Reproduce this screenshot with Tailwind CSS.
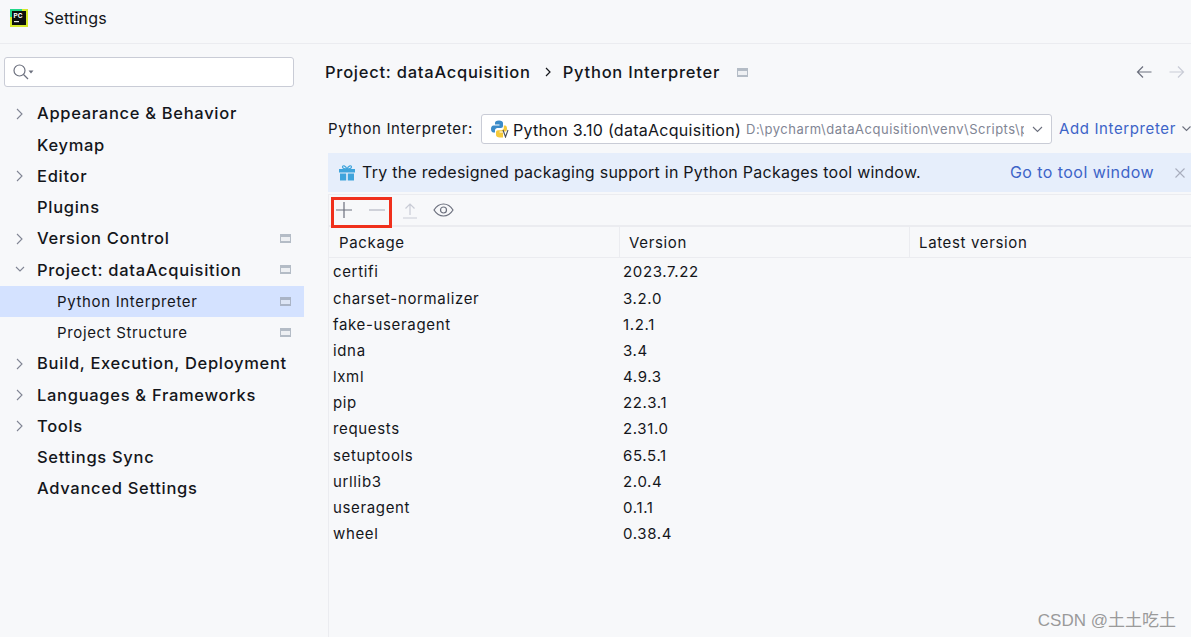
<!DOCTYPE html>
<html lang="en">
<head>
    <meta charset="UTF-8">
    <title>Settings</title>
    <script src="https://cdn.jsdelivr.net/npm/@tailwindcss/browser@4"></script>
</head>
<body class="bg-[#f7f8fa] font-['Inter',sans-serif] text-[#14161b] w-[1191px] h-[637px] overflow-hidden relative">
    <!-- title bar -->
    <div class="h-[44px] border-b border-[#ebecf0] flex items-center pl-[10px] pb-[8px]">
        <svg width="18" height="18" viewBox="0 0 18 18">
            <rect width="18" height="18" fill="#d6e82a"/>
            <rect x="0" y="0" width="12" height="8" fill="#21d789"/>
            <rect x="2" y="2" width="14" height="14" fill="#0c0f0c"/>
            <rect x="4" y="12" width="5" height="1.2" fill="#e8e8e8"/>
            <text x="3.5" y="8.5" font-size="6.5" font-weight="700" fill="#fff" font-family="Inter">PC</text>
        </svg>
        <span class="ml-[16px] text-[16px] tracking-[0.2px]">Settings</span>
    </div>

    <div class="flex h-[593px]">
        <!-- sidebar -->
        <aside class="w-[304px] shrink-0 pt-[13px]">
            <div class="ml-[4px] w-[290px] h-[30px] bg-white border border-[#c9ccd6] rounded-[3px] flex items-center pl-[8px]">
                <svg width="25" height="17" viewBox="0 0 25 17" fill="none">
                    <circle cx="6.500" cy="6.500" r="5.500" stroke="#6c707e" stroke-width="1.200"/>
                    <path d="M10.500 10.500 15 15" stroke="#6c707e" stroke-width="1.200"/>
                    <path d="M15.500 6.500h5l-2.500 3z" fill="#6c707e"/>
                </svg>
            </div>
            <nav class="mt-[11px] text-[16.500px] font-medium tracking-[0.7px]">
                <div class="h-[31.250px] flex items-center"><svg class="ml-[16px] mr-[14px]" width="7" height="12" viewBox="0 0 7 12" fill="none"><path d="M1 1l5 5-5 5" stroke="#818594" stroke-width="1.100"/></svg>Appearance &amp; Behavior</div>
                <div class="h-[31.250px] flex items-center pl-[37px]">Keymap</div>
                <div class="h-[31.250px] flex items-center"><svg class="ml-[16px] mr-[14px]" width="7" height="12" viewBox="0 0 7 12" fill="none"><path d="M1 1l5 5-5 5" stroke="#818594" stroke-width="1.100"/></svg>Editor</div>
                <div class="h-[31.250px] flex items-center pl-[37px]">Plugins</div>
                <div class="h-[31.250px] flex items-center pr-[13px]"><svg class="ml-[16px] mr-[14px]" width="7" height="12" viewBox="0 0 7 12" fill="none"><path d="M1 1l5 5-5 5" stroke="#818594" stroke-width="1.100"/></svg>Version Control
                    <svg class="ml-auto" width="11" height="9" viewBox="0 0 11 9"><rect width="11" height="9" fill="#b4bcc6"/><rect x="1" y="3" width="9" height="4" fill="#eef0f3"/></svg>
                </div>
                <div class="h-[31.250px] flex items-center pr-[13px]"><svg class="ml-[15px] mr-[12px]" width="10" height="7" viewBox="0 0 10 7" fill="none"><path d="M1 1l4 4 4-4" stroke="#818594" stroke-width="1.100"/></svg>Project: dataAcquisition
                    <svg class="ml-auto" width="11" height="9" viewBox="0 0 11 9"><rect width="11" height="9" fill="#b4bcc6"/><rect x="1" y="3" width="9" height="4" fill="#eef0f3"/></svg>
                </div>
                <div class="h-[31.250px] flex items-center pl-[57px] pr-[13px] bg-[#d4e2ff] font-normal text-[15px] tracking-[0.65px]"><span class="mt-[2px]">Python Interpreter</span>
                    <svg class="ml-auto" width="11" height="9" viewBox="0 0 11 9"><rect width="11" height="9" fill="#aab4c6"/><rect x="1" y="3" width="9" height="4" fill="#dde5f5"/></svg>
                </div>
                <div class="h-[31.250px] flex items-center pl-[57px] pr-[13px] font-normal text-[15px] tracking-[0.65px]"><span class="mt-[1px]">Project Structure</span>
                    <svg class="ml-auto" width="11" height="9" viewBox="0 0 11 9"><rect width="11" height="9" fill="#b4bcc6"/><rect x="1" y="3" width="9" height="4" fill="#eef0f3"/></svg>
                </div>
                <div class="h-[31.250px] flex items-center"><svg class="ml-[16px] mr-[14px]" width="7" height="12" viewBox="0 0 7 12" fill="none"><path d="M1 1l5 5-5 5" stroke="#818594" stroke-width="1.100"/></svg>Build, Execution, Deployment</div>
                <div class="h-[31.250px] flex items-center"><svg class="ml-[16px] mr-[14px]" width="7" height="12" viewBox="0 0 7 12" fill="none"><path d="M1 1l5 5-5 5" stroke="#818594" stroke-width="1.100"/></svg>Languages &amp; Frameworks</div>
                <div class="h-[31.250px] flex items-center"><svg class="ml-[16px] mr-[14px]" width="7" height="12" viewBox="0 0 7 12" fill="none"><path d="M1 1l5 5-5 5" stroke="#818594" stroke-width="1.100"/></svg>Tools</div>
                <div class="h-[31.250px] flex items-center pl-[37px]">Settings Sync</div>
                <div class="h-[31.250px] flex items-center pl-[37px]">Advanced Settings</div>
            </nav>
        </aside>

        <!-- main panel -->
        <main class="flex-1 min-w-0 pl-[21px]">
            <div class="h-[56px] flex items-center pr-[6px] text-[16.500px] font-medium tracking-[0.75px]">
                <span>Project: dataAcquisition</span>
                <svg class="ml-[14px] mr-[12px]" width="6" height="10" viewBox="0 0 6 10" fill="none"><path d="M1 1l4 4-4 4" stroke="#14161b" stroke-width="1.200"/></svg>
                <span>Python Interpreter</span>
                <svg class="ml-[17px]" width="11" height="9" viewBox="0 0 11 9"><rect width="11" height="9" fill="#b4bcc6"/><rect x="1" y="3" width="9" height="4" fill="#eef0f3"/></svg>
                <svg class="ml-auto" width="16" height="14" viewBox="0 0 16 14" fill="none"><path d="M15.500 7H1.500M7 1.500 1.500 7 7 12.500" stroke="#6c707e" stroke-width="1.200"/></svg>
                <svg class="ml-[17px]" width="16" height="14" viewBox="0 0 16 14" fill="none"><path d="M.5 7h14M9 1.500 14.500 7 9 12.500" stroke="#c9ccd6" stroke-width="1.200"/></svg>
            </div>

            <div class="mt-[14px] h-[30px] flex items-center pl-[3px] text-[15px] tracking-[0.62px]">
                <span class="w-[153px] shrink-0">Python Interpreter:</span>
                <div class="w-[571px] h-[30px] shrink-0 bg-white border border-[#c9ccd6] rounded-[3px] flex items-center pl-[9px] overflow-hidden">
                    <svg class="shrink-0" width="19" height="18" viewBox="0 0 19 18">
                        <path d="M8 0.500c-3 0-4 1-4 2.500v1.500h4.500V5.500H2.500C1 5.500 0 7 0 9s1 3.500 2.500 3.500H4V10.500c0-1.500 1-2.500 2.500-2.500H10c1.200 0 2-.8 2-2V3c0-1.500-1.500-2.500-4-2.500z" fill="#3b8bc9"/>
                        <path d="M12.800 5.500V7.500c0 1.800-1 2.800-2.600 2.800H6.800c-1 0-1.800.8-1.800 2v2.700c0 1.500 1.500 2.500 3.500 2.500h3.500V12.500H8.500v-1h6c1 0 1.500-1.500 1.500-3s-.5-3-2-3z" fill="#f5c93a"/>
                        <path d="M12 10l2.500 7 2.500-7" fill="none" stroke="#4b5059" stroke-width="1.100"/>
                    </svg>
                    <span class="ml-[3px] mt-[1px] shrink-0 text-[16px] tracking-[0.28px]">Python 3.10 (dataAcquisition)</span>
                    <span class="ml-[5px] mt-[1px] text-[13px] text-[#818594] tracking-[0.5px] w-[278px] shrink-0 overflow-hidden whitespace-nowrap">D:\pycharm\dataAcquisition\venv\Scripts\python.exe</span>
                    <svg class="ml-auto mr-[8px] shrink-0" width="11" height="7" viewBox="0 0 11 7" fill="none"><path d="M1 1l4.500 4.500L10 1" stroke="#6c707e" stroke-width="1.100"/></svg>
                </div>
                <span class="ml-[7px] text-[#3d64c8] whitespace-nowrap">Add Interpreter</span>
                <svg class="ml-[6px] shrink-0" width="9" height="6" viewBox="0 0 9 6" fill="none"><path d="M.5.500l4 4 4-4" stroke="#6c707e" stroke-width="1.100"/></svg>
            </div>

            <div class="mt-[9px] h-[39px] bg-[#e6eefb] flex items-center pl-[11px] pr-[6px] ml-[3px] text-[16px] tracking-[0.25px]">
                <svg class="shrink-0" width="16" height="16" viewBox="0 0 16 16" fill="#3fa4dc">
                    <rect x="0" y="4" width="16" height="3.500"/>
                    <rect x="1" y="8.500" width="6.200" height="7"/>
                    <rect x="8.800" y="8.500" width="6.200" height="7"/>
                    <path d="M8 4C6 4 3.500 3.600 3.500 2 3.500.2 6.500 0 8 4c1.500-4 4.500-3.800 4.500-2C12.500 3.600 10 4 8 4z" fill="none" stroke="#3fa4dc" stroke-width="1.200"/>
                </svg>
                <span class="ml-[7px] -mt-[1px]">Try the redesigned packaging support in Python Packages tool window.</span>
                <span class="ml-auto -mt-[1px] text-[#3d64c8] tracking-[0.45px]">Go to tool window</span>
                <svg class="ml-[21px]" width="10" height="10" viewBox="0 0 10 10" fill="none"><path d="M.5.500l9 9M9.500.500l-9 9" stroke="#a8adbd" stroke-width="1.100"/></svg>
            </div>

            <div class="ml-[3px] border-l border-[#ebecf0] h-[450px]">
                <div class="border-t border-[#ebecf0] mt-[2px] h-[33px] border-b-2 flex items-center pl-[7px]">
                    <svg width="16" height="16" viewBox="0 0 16 16" fill="none"><path d="M8 0v16M0 8h16" stroke="#6c707e" stroke-width="1.200"/></svg>
                    <svg class="ml-[17px]" width="16" height="16" viewBox="0 0 16 16" fill="none"><path d="M0 8h16" stroke="#b4b8c4" stroke-width="1.200"/></svg>
                    <svg class="ml-[17px]" width="16" height="17" viewBox="0 0 16 17" fill="none"><path d="M8 13V2M3.500 6.500 8 2l4.500 4.500M1 16h14" stroke="#c9ccd6" stroke-width="1.200"/></svg>
                    <svg class="ml-[15px]" width="21" height="14" viewBox="0 0 21 14" fill="none"><path d="M1 7c2.500-4 5.500-6 9.500-6s7 2 9.500 6c-2.500 4-5.500 6-9.500 6S3.500 11 1 7z" stroke="#6c707e" stroke-width="1.200"/><circle cx="10.500" cy="7" r="3" stroke="#6c707e" stroke-width="1.200"/></svg>
                </div>
                <div class="grid grid-cols-[290px_290px_1fr] h-[31px] border-b border-[#ebecf0] text-[15px] tracking-[0.65px]">
                    <div class="pl-[10px] pt-[2px] flex items-center">Package</div>
                    <div class="pl-[9px] pt-[2px] flex items-center border-l border-[#ebecf0]">Version</div>
                    <div class="pl-[9px] pt-[2px] flex items-center border-l border-[#ebecf0]">Latest version</div>
                </div>
                <div class="pt-[1.500px] text-[15px] tracking-[0.65px]">
                    <div class="grid grid-cols-[290px_1fr] h-[26.200px] items-center pl-[4px]"><span>certifi</span><span>2023.7.22</span></div>
                    <div class="grid grid-cols-[290px_1fr] h-[26.200px] items-center pl-[4px]"><span>charset-normalizer</span><span>3.2.0</span></div>
                    <div class="grid grid-cols-[290px_1fr] h-[26.200px] items-center pl-[4px]"><span>fake-useragent</span><span>1.2.1</span></div>
                    <div class="grid grid-cols-[290px_1fr] h-[26.200px] items-center pl-[4px]"><span>idna</span><span>3.4</span></div>
                    <div class="grid grid-cols-[290px_1fr] h-[26.200px] items-center pl-[4px]"><span>lxml</span><span>4.9.3</span></div>
                    <div class="grid grid-cols-[290px_1fr] h-[26.200px] items-center pl-[4px]"><span>pip</span><span>22.3.1</span></div>
                    <div class="grid grid-cols-[290px_1fr] h-[26.200px] items-center pl-[4px]"><span>requests</span><span>2.31.0</span></div>
                    <div class="grid grid-cols-[290px_1fr] h-[26.200px] items-center pl-[4px]"><span>setuptools</span><span>65.5.1</span></div>
                    <div class="grid grid-cols-[290px_1fr] h-[26.200px] items-center pl-[4px]"><span>urllib3</span><span>2.0.4</span></div>
                    <div class="grid grid-cols-[290px_1fr] h-[26.200px] items-center pl-[4px]"><span>useragent</span><span>0.1.1</span></div>
                    <div class="grid grid-cols-[290px_1fr] h-[26.200px] items-center pl-[4px]"><span>wheel</span><span>0.38.4</span></div>
                </div>
            </div>
        </main>
    </div>

    <!-- red annotation box -->
    <div class="absolute left-[331px] top-[197px] w-[61px] h-[31px] border-[3px] border-[#f0301c]"></div>
    <!-- watermark -->
    <div class="absolute right-[15px] top-[608px] text-[17px] text-[#9a9a9a] font-['Liberation_Sans','Noto_Sans_CJK_SC',sans-serif]">CSDN @土土吃土</div>
</body>
</html>
